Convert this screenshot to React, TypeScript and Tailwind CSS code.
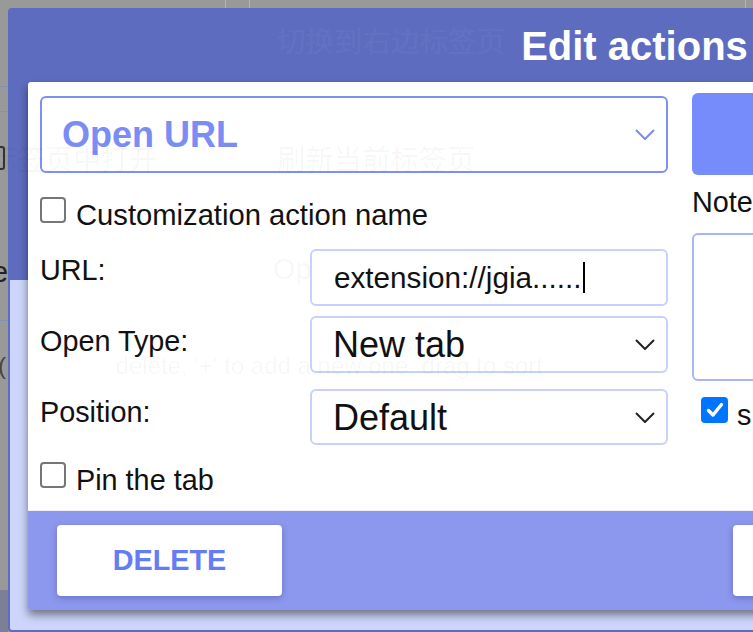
import React from "react";

const Chevron = ({ color }: { color: string }) => (
  <svg width="20" height="11" viewBox="0 0 20 11" fill="none">
    <path d="M1 1 L10 10 L19 1" stroke={color} strokeWidth="2" />
  </svg>
);

const Box = ({ checked = false }: { checked?: boolean }) =>
  checked ? (
    <span className="flex h-[26px] w-[27px] shrink-0 items-center justify-center rounded-[4px] bg-[#0075ff]">
      <svg width="18" height="16" viewBox="0 0 18 16" fill="none">
        <path d="M2.5 8.5 L7 13 L15.5 2.5" stroke="white" strokeWidth="3.4" strokeLinecap="round" strokeLinejoin="round" />
      </svg>
    </span>
  ) : (
    <span className="block h-[26px] w-[26px] shrink-0 rounded-[4px] border-2 border-[#767676] bg-white" />
  );

export default function App() {
  return (
    <div className="relative h-[632px] w-[753px] overflow-hidden bg-[#999999] font-['Liberation_Sans',Arial,sans-serif] text-[#111]">
      {/* background page fragments */}
      <div className="absolute left-[225px] top-0 h-[8px] w-px bg-[#b4b4b4]" />
      <div className="absolute left-[249px] top-0 h-[8px] w-px bg-[#b4b4b4]" />
      <div className="absolute left-[745px] top-0 h-[8px] w-px bg-[#b4b4b4]" />
      <div className="absolute left-0 top-[86px] h-px w-[8px] bg-[#8690b4]" />
      <div className="absolute left-0 top-[111px] h-px w-[8px] bg-[#8690b4]" />
      <div className="absolute left-0 top-[320px] h-px w-[8px] bg-[#8690b4]" />
      <div className="absolute left-[-20px] top-[146px] h-[24px] w-[25px] rounded-[3px] border-2 border-[#333]" />
      <span className="absolute left-[-8px] top-[256px] text-[28.8px] leading-[33px] text-[#222]">e</span>
      <span className="absolute left-[-2px] top-[352px] text-[24px] leading-[28px] text-[#444]">(</span>
      <div className="absolute left-0 top-[590px] h-[42px] w-[8px] bg-[#7c7f95]" />

      {/* dialog */}
      <div className="absolute left-[8px] top-[8px] h-[624px] w-[1253px] rounded-[4px] border-2 border-[#5e6cbf] bg-[linear-gradient(to_bottom,#5e6cbf_270px,#cdd5fb_270px)]">
        <h2 className="h-[72px] pt-[13px] text-center text-[40px] font-bold leading-[46px] text-white">
          Edit actions
        </h2>
        <div className="mx-[18px] rounded-[3px] shadow-[0_5px_9px_rgba(0,0,0,0.45)]">
          <div className="flex h-[428px] gap-[24px] rounded-t-[3px] bg-white px-[12px] pt-[14px]">
            {/* left column */}
            <div className="flex w-[628px] shrink-0 flex-col">
              <div className="flex h-[77px] items-center justify-between rounded-[6px] border-2 border-[#7b8ff7] pl-[20px] pr-[11px]">
                <span className="text-[36px] font-bold leading-[41px] text-[#7b8cf5]">Open URL</span>
                <Chevron color="#7b8cf5" />
              </div>
              <label className="mt-[24px] flex h-[26px] items-start gap-[10px]">
                <Box />
                <span className="mt-[2px] whitespace-nowrap text-[29.2px] leading-[33px]">Customization action name</span>
              </label>
              <div className="mt-[26px] flex items-start">
                <span className="mt-[5px] w-[270px] text-[28.8px] leading-[33px]">URL:</span>
                <div className="flex h-[57px] w-[358px] items-center rounded-[6px] border-2 border-[#c7d1fb] pl-[22px]">
                  <span className="text-[29.7px] leading-[33px] text-[#111]">extension://jgia......</span>
                  <span className="ml-[1px] h-[31px] w-[2px] bg-black" />
                </div>
              </div>
              <div className="mt-[10px] flex items-start">
                <span className="mt-[9px] w-[270px] text-[28.8px] leading-[33px]">Open Type:</span>
                <div className="flex h-[57px] w-[358px] items-center justify-between rounded-[6px] border-2 border-[#c7d1fb] pl-[21px] pr-[11px]">
                  <span className="text-[36px] leading-[41px] text-[#111]">New tab</span>
                  <Chevron color="#222" />
                </div>
              </div>
              <div className="mt-[16px] flex items-start">
                <span className="mt-[7px] w-[270px] text-[28.8px] leading-[33px]">Position:</span>
                <div className="flex h-[56px] w-[358px] items-center justify-between rounded-[6px] border-2 border-[#c7d1fb] pl-[21px] pr-[11px]">
                  <span className="text-[36px] leading-[41px] text-[#111]">Default</span>
                  <Chevron color="#222" />
                </div>
              </div>
              <label className="mt-[17px] flex h-[26px] items-start gap-[10px]">
                <Box />
                <span className="mt-[2px] whitespace-nowrap text-[28.8px] leading-[33px]">Pin the tab</span>
              </label>
            </div>
            {/* right column */}
            <div className="-mt-[3px] flex flex-1 flex-col">
              <div className="h-[82px] rounded-[6px] bg-[#778cfb]" />
              <span className="mt-[11px] text-[28.8px] leading-[33px]">Note</span>
              <div className="mt-[14px] h-[148px] rounded-[6px] border-2 border-[#a8b6f9]" />
              <label className="ml-[9px] mt-[16px] flex h-[26px] items-start gap-[9px]">
                <Box checked />
                <span className="mt-[2px] text-[28.8px] leading-[33px]">show</span>
              </label>
            </div>
          </div>
          <div className="flex h-[100px] items-start gap-[451px] rounded-b-[3px] border-t border-[#eceefb] bg-[#8c97ee] pl-[29px] pt-[14px]">
            <button className="flex h-[71px] w-[225px] items-center justify-center rounded-[4px] bg-white text-[28.8px] font-bold text-[#647cf6] shadow-[0_2px_6px_rgba(40,50,120,0.35)]">
              DELETE
            </button>
            <button className="h-[71px] w-[225px] rounded-[4px] bg-white shadow-[0_2px_6px_rgba(40,50,120,0.35)]" />
          </div>
        </div>
      </div>

      {/* faint ghost text showing through */}
      <div className="pointer-events-none absolute inset-0 font-['Noto_Sans_CJK_SC',sans-serif]">
        <span className="absolute left-[277px] top-[26px] whitespace-nowrap text-[28.5px] leading-[28px] text-white/[0.035]">切换到右边标签页</span>
        <span className="absolute left-[-39px] top-[144px] whitespace-nowrap text-[28px] leading-[28px] text-black/[0.04]">新标签页中打开</span>
        <span className="absolute left-[277px] top-[144px] whitespace-nowrap text-[28.3px] leading-[28px] text-black/[0.04]">刷新当前标签页</span>
        <span className="absolute left-[273px] top-[253px] whitespace-nowrap font-['Liberation_Sans',Arial,sans-serif] text-[28.8px] leading-[33px] text-black/[0.04]">Op</span>
        <span className="absolute right-[210px] top-[352px] whitespace-nowrap font-['Liberation_Sans',Arial,sans-serif] text-[24px] leading-[28px] text-black/[0.04]">delete, '+' to add a new one, drag to sort</span>
      </div>
    </div>
  );
}
